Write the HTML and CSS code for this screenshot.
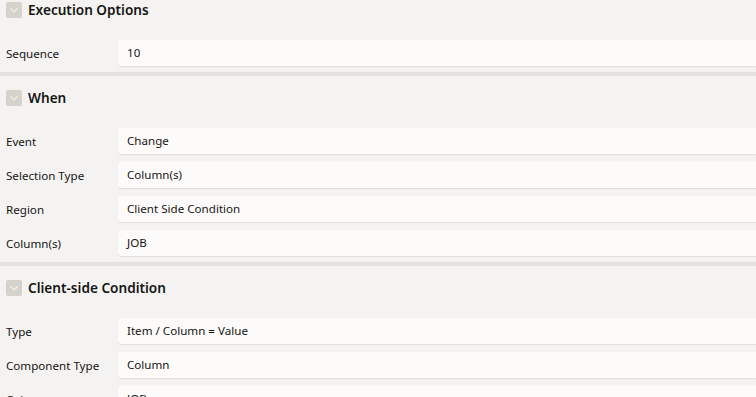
FILE: index.html
```html
<!DOCTYPE html>
<html lang="en">
<head>
    <meta charset="UTF-8">
    <title>Property Editor</title>
    <link rel="stylesheet" href="styles.css">
</head>
<body>
    <div class="editor">
        <!-- Execution Options -->
        <div class="group first">
            <div class="group-header">
                <span class="toggle">
                    <svg width="16" height="16" viewBox="0 0 16 16"><path d="M4.5 6.5 L8 10 L11.5 6.5" fill="none" stroke="#f2f1ef" stroke-width="1.2"/></svg>
                </span>
                <span class="group-title">Execution Options</span>
            </div>
            <div class="prop">
                <label class="prop-label">Sequence</label>
                <div class="prop-value">10</div>
            </div>
        </div>

        <!-- When -->
        <div class="group">
            <div class="group-header">
                <span class="toggle">
                    <svg width="16" height="16" viewBox="0 0 16 16"><path d="M4.5 6.5 L8 10 L11.5 6.5" fill="none" stroke="#f2f1ef" stroke-width="1.2"/></svg>
                </span>
                <span class="group-title">When</span>
            </div>
            <div class="prop">
                <label class="prop-label">Event</label>
                <div class="prop-value">Change</div>
            </div>
            <div class="prop">
                <label class="prop-label">Selection Type</label>
                <div class="prop-value">Column(s)</div>
            </div>
            <div class="prop">
                <label class="prop-label">Region</label>
                <div class="prop-value">Client Side Condition</div>
            </div>
            <div class="prop">
                <label class="prop-label">Column(s)</label>
                <div class="prop-value">JOB</div>
            </div>
        </div>

        <!-- Client-side Condition -->
        <div class="group">
            <div class="group-header">
                <span class="toggle">
                    <svg width="16" height="16" viewBox="0 0 16 16"><path d="M4.5 6.5 L8 10 L11.5 6.5" fill="none" stroke="#f2f1ef" stroke-width="1.2"/></svg>
                </span>
                <span class="group-title">Client-side Condition</span>
            </div>
            <div class="prop">
                <label class="prop-label">Type</label>
                <div class="prop-value">Item / Column = Value</div>
            </div>
            <div class="prop">
                <label class="prop-label">Component Type</label>
                <div class="prop-value">Column</div>
            </div>
            <div class="prop">
                <label class="prop-label">Column</label>
                <div class="prop-value">JOB</div>
            </div>
        </div>
    </div>
</body>
</html>
```

FILE: styles.css
```css
* {
    margin: 0;
    padding: 0;
    box-sizing: border-box;
    font-family: 'Noto Sans', sans-serif;
}

body {
    background-color: #f4f3f1;
    color: #161513;
    overflow: hidden;
}

.editor {
    display: flex;
    flex-direction: column;
}

.group {
    border-top: 4px solid #e4e2df;
    padding-bottom: 6px;
}

.group.first {
    border-top: none;
}

.group-header {
    display: flex;
    align-items: center;
    gap: 6px;
    padding: 14px 6px 22px;
}

.group.first .group-header {
    padding-top: 2px;
}

.toggle {
    width: 16px;
    height: 16px;
    border-radius: 2px;
    background-color: #d5d1cb;
    display: flex;
}

.group-title {
    font-size: 13.6px;
    font-weight: 600;
    line-height: 16px;
}

.prop {
    display: flex;
    align-items: center;
    margin-bottom: 8px;
}

.prop:last-child {
    margin-bottom: 0;
}

.prop-label {
    width: 118px;
    padding-left: 6px;
    font-size: 11.6px;
    flex-shrink: 0;
}

.prop-value {
    flex: 1;
    height: 26px;
    line-height: 25px;
    padding-left: 9px;
    font-size: 11.6px;
    background-color: #fcfbfa;
    border-radius: 3px 0 0 3px;
    box-shadow: 0 1px 1px rgba(0, 0, 0, 0.09);
}
```
